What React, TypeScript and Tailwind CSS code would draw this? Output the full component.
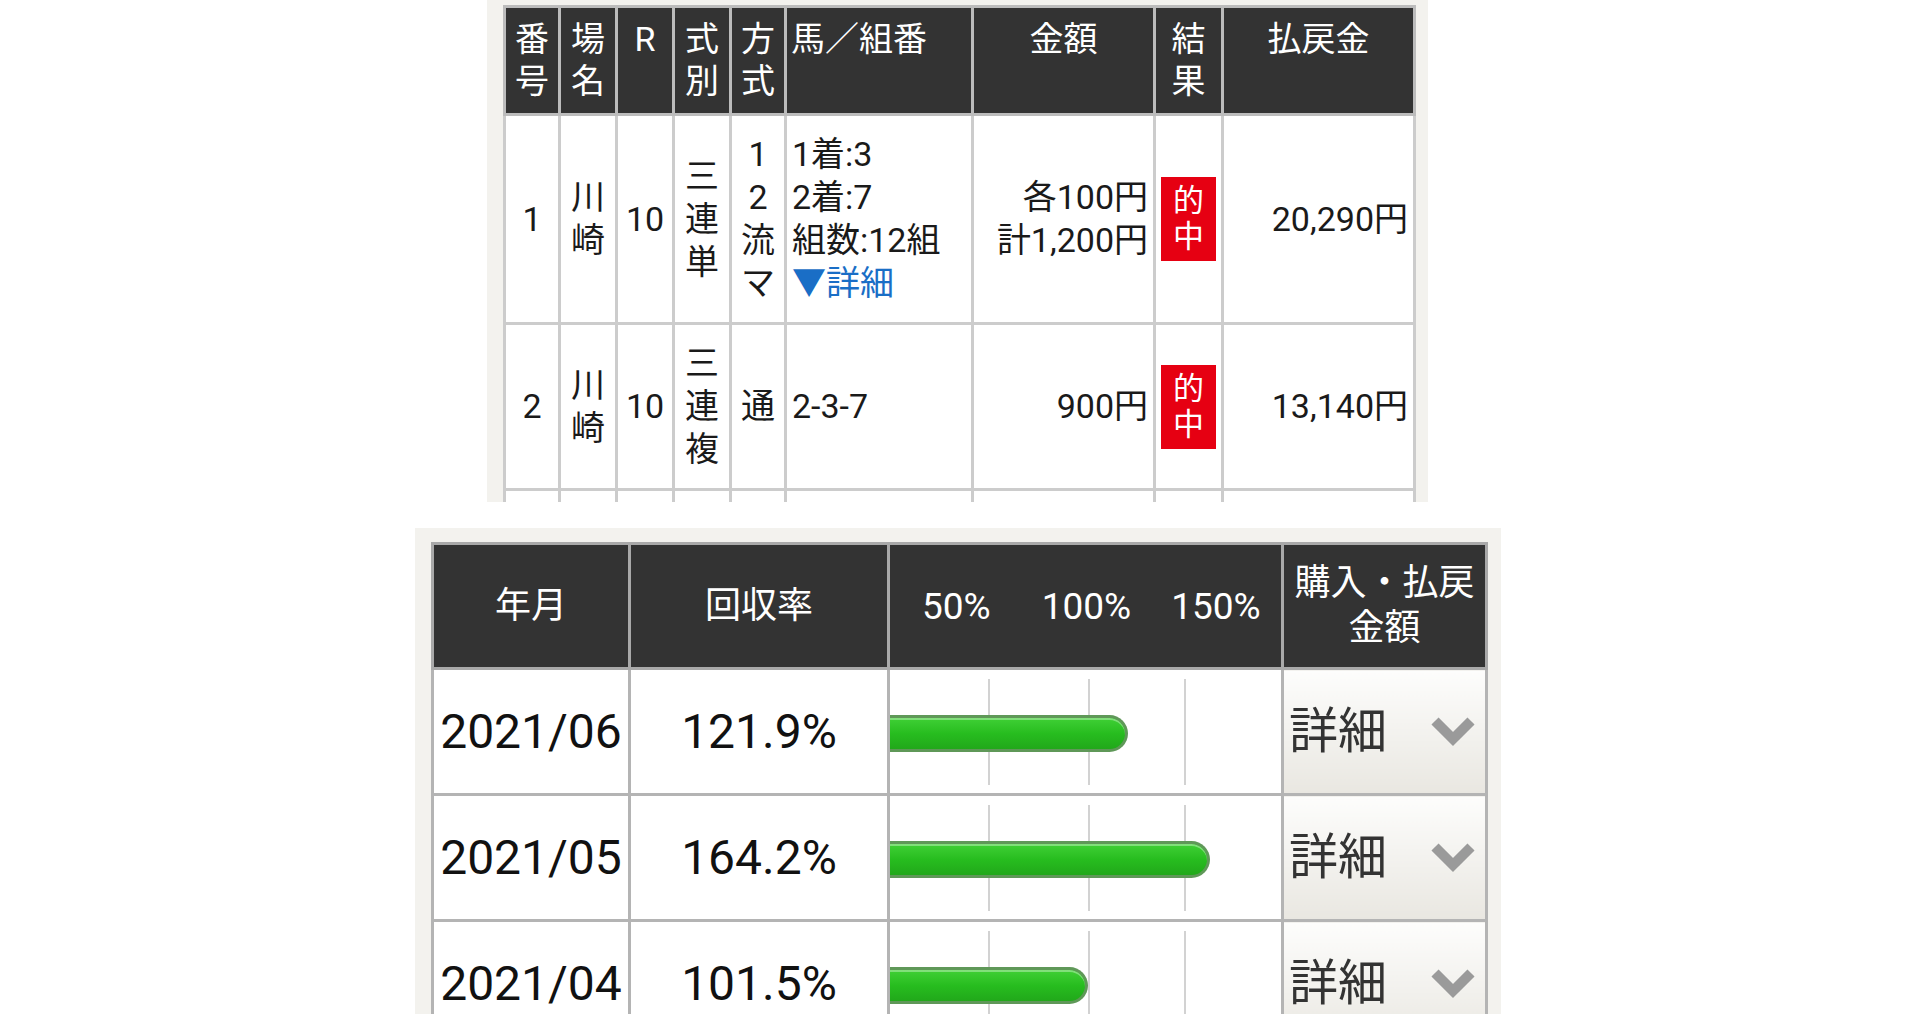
const FONT = "font-['Roboto','Noto_Sans_CJK_JP',sans-serif]";

const months = [
  { ym: '2021/06', rate: 121.9 },
  { ym: '2021/05', rate: 164.2 },
  { ym: '2021/04', rate: 101.5 },
];

const th = 'border-[3px] border-[#bcbcbc] bg-[#333333] text-white font-normal align-top pt-[10px] pb-[11px] px-[2px] text-center';
const td = 'border-[3px] border-[#cccccc] bg-white align-middle py-[17px] px-[5px]';

function Badge() {
  return (
    <span className="inline-block w-[55px] bg-[#e60012] py-[6px] text-center text-[31px] leading-[36px] text-white">
      的<br />中
    </span>
  );
}

function BetTable() {
  return (
    <table className="w-[910px] table-fixed border-collapse text-[34px] leading-[43px] text-[#1a1a1a]">
      <colgroup>
        <col className="w-[55px]" />
        <col className="w-[57px]" />
        <col className="w-[57px]" />
        <col className="w-[57px]" />
        <col className="w-[55px]" />
        <col className="w-[187px]" />
        <col className="w-[182px]" />
        <col className="w-[68px]" />
        <col className="w-[192px]" />
      </colgroup>
      <thead>
        <tr className="leading-[42px]">
          <th className={th}>番<br />号</th>
          <th className={th}>場<br />名</th>
          <th className={th}>R</th>
          <th className={th}>式<br />別</th>
          <th className={th}>方<br />式</th>
          <th className={`${th} !text-left !pl-[4px]`}>馬／組番</th>
          <th className={th}>金額</th>
          <th className={th}>結<br />果</th>
          <th className={th}>払戻金</th>
        </tr>
      </thead>
      <tbody>
        <tr>
          <td className={`${td} text-center`}>1</td>
          <td className={`${td} text-center`}>川<br />崎</td>
          <td className={`${td} text-center`}>10</td>
          <td className={`${td} text-center`}>三<br />連<br />単</td>
          <td className={`${td} text-center`}>1<br />2<br />流<br />マ</td>
          <td className={`${td} text-left`}>
            1着:3<br />2着:7<br />組数:12組<br />
            <span className="text-[#1a6ec6]">▼詳細</span>
          </td>
          <td className={`${td} text-right`}>各100円<br />計1,200円</td>
          <td className={`${td} text-center`}><Badge /></td>
          <td className={`${td} text-right`}>20,290円</td>
        </tr>
        <tr>
          <td className={`${td} text-center`}>2</td>
          <td className={`${td} text-center`}>川<br />崎</td>
          <td className={`${td} text-center`}>10</td>
          <td className={`${td} text-center`}>三<br />連<br />複</td>
          <td className={`${td} text-center`}>通</td>
          <td className={`${td} text-left`}>2-3-7</td>
          <td className={`${td} text-right`}>900円</td>
          <td className={`${td} text-center`}><Badge /></td>
          <td className={`${td} text-right`}>13,140円</td>
        </tr>
        <tr className="h-[80px]">
          {Array.from({ length: 9 }).map((_, i) => (
            <td key={i} className={td}></td>
          ))}
        </tr>
      </tbody>
    </table>
  );
}

function Chevron() {
  return (
    <svg width="44" height="30" viewBox="0 0 44 30">
      <polyline points="4,4 22,22 40,4" fill="none" stroke="#9a9a9a" strokeWidth="10" strokeLinejoin="miter" />
    </svg>
  );
}

const bth = 'border-[3px] border-[#a9a9a9] bg-[#333333] text-white font-normal text-[36px] leading-[45px] text-center align-middle h-[125px] p-0';
const btd = 'border-[3px] border-[#b4b4b4] align-middle h-[126px] p-0';

function RateTable() {
  return (
    <table className="w-[1054px] table-fixed border-collapse text-[#111111]">
      <colgroup>
        <col className="w-[197px]" />
        <col className="w-[259px]" />
        <col className="w-[394px]" />
        <col className="w-[204px]" />
      </colgroup>
      <thead>
        <tr>
          <th className={bth}>年月</th>
          <th className={bth}>回収率</th>
          <th className={bth}>
            <div className="flex pl-[32px] text-[37px]">
              <span className="mr-[51px]">50%</span>
              <span className="mr-[40px]">100%</span>
              <span>150%</span>
            </div>
          </th>
          <th className={bth}>購入・払戻<br />金額</th>
        </tr>
      </thead>
      <tbody>
        {months.map((m) => (
          <tr key={m.ym}>
            <td className={`${btd} bg-white text-center text-[48px]`}>{m.ym}</td>
            <td className={`${btd} bg-white text-center text-[48px]`}>{m.rate.toFixed(1)}%</td>
            <td className={`${btd} bg-white`}>
              <div className="relative flex h-[120px] items-center">
                <div className="absolute top-[7px] bottom-[7px] left-[98px] w-[2px] bg-[#d2d2d2]" />
                <div className="absolute top-[7px] bottom-[7px] left-[198px] w-[2px] bg-[#d2d2d2]" />
                <div className="absolute top-[7px] bottom-[7px] left-[294px] w-[2px] bg-[#d2d2d2]" />
                <div
                  className="relative mt-[4px] h-[37px] rounded-r-full border-[3px] border-l-0 border-[#5f9858] bg-gradient-to-b from-[#3fd035] via-[#27bd1f] to-[#21a81a] shadow-[inset_0_2px_0_rgba(255,255,255,0.35)]"
                  style={{ width: Math.round(m.rate * 1.95) }}
                />
              </div>
            </td>
            <td className={`${btd} bg-gradient-to-b from-[#fdfdfc] to-[#e9e7e1]`}>
              <div className="flex items-center justify-between pl-[5px] pr-[10px]">
                <span className="text-[49px] leading-[56px] text-[#333333]">詳細</span>
                <Chevron />
              </div>
            </td>
          </tr>
        ))}
      </tbody>
    </table>
  );
}

export default function App() {
  return (
    <div className={`${FONT} flex h-[1014px] w-[1920px] flex-col overflow-hidden bg-white`}>
      <div className="ml-[487px] h-[502px] w-[941px] shrink-0 overflow-hidden bg-[#f3f2ee] pt-[5px] pl-[16px]">
        <BetTable />
      </div>
      <div className="mt-[26px] ml-[415px] h-[486px] w-[1086px] shrink-0 overflow-hidden bg-[#f3f2ee] pt-[14px] pl-[16px]">
        <RateTable />
      </div>
    </div>
  );
}
